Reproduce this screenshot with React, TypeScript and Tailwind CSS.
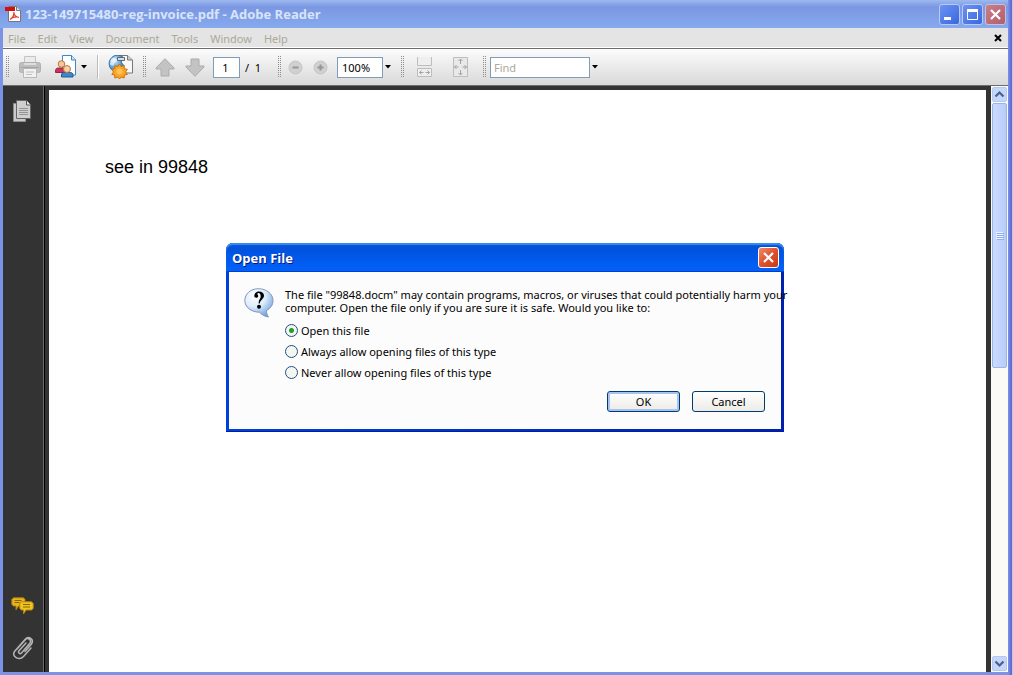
import { FC, ReactNode, useState } from 'react';

const MENU_ITEMS = ['File', 'Edit', 'View', 'Document', 'Tools', 'Window', 'Help'];

const OPEN_OPTIONS = [
  { id: 'open', label: 'Open this file' },
  { id: 'always', label: 'Always allow opening files of this type' },
  { id: 'never', label: 'Never allow opening files of this type' },
];

interface ButtonProps {
  label: string;
  className?: string;
  children: ReactNode;
}

const IconButton: FC<ButtonProps> = ({ label, className = '', children }) => (
  <button type="button" aria-label={label} className={`block shrink-0 ${className}`}>
    {children}
  </button>
);

const Grip: FC<{ className?: string }> = ({ className = '' }) => (
  <svg width="4" height="22" shapeRendering="crispEdges" className={`shrink-0 ${className}`}>
    {Array.from({ length: 11 }, (_, i) => (
      <g key={i} fill="#8e8e8e">
        <rect x="0" y={i * 2} width="1" height="1" />
        <rect x="2" y={i * 2} width="1" height="1" />
      </g>
    ))}
  </svg>
);

const DropArrow: FC = () => (
  <svg width="6" height="4" viewBox="0 0 6 4">
    <path d="M0 0h6L3 3.5z" fill="#000" />
  </svg>
);

const PdfIcon: FC = () => (
  <svg width="16" height="16" viewBox="0 0 16 16">
    <path d="M3.5.5h8l4 4v11h-12z" fill="#fff" stroke="#777" />
    <path d="M11.5.5v4h4" fill="#ddd" stroke="#777" />
    <path
      d="M5 13.5c2-1 4-4 4-7.5M9 7c.5 3 2.5 4 5 4.5M5.5 12.5c2.5-1.5 5-2 8-1.5"
      fill="none"
      stroke="#e0382e"
      strokeWidth="1.2"
    />
    <path d="M0 1h10v4H0z" fill="#d80d0d" />
  </svg>
);

const PrinterIcon: FC = () => (
  <svg width="22" height="22" viewBox="0 0 22 22">
    <path d="M5.5.5h11v8h-11z" fill="#ececec" stroke="#c4c4c4" />
    <rect x=".5" y="6.5" width="21" height="10" rx="2" fill="#bebebe" stroke="#b0b0b0" />
    <path d="M5 7h12v2H5z" fill="#dedede" />
    <path d="M2 11.5h18" stroke="#a5a5a5" />
    <path d="M4.5 12.500h13v9h-13z" fill="#f1f1f1" stroke="#b7b7b7" />
    <path d="M7 16h8M7 18.500h6" stroke="#c0c0c0" />
  </svg>
);

const PeopleIcon: FC = () => (
  <svg width="22" height="24" viewBox="0 0 22 24">
    <path d="M7.5.5h9l4 4.5v15h-13z" fill="#fff" stroke="#3f86c8" />
    <path d="M16.5.5v4.5h4" fill="#cfe4f7" stroke="#3f86c8" />
    <path d="M.5 17.500v-2c0-1.500 1-2.500 3-2.500h5c1.500 0 2.500 1 2.500 2.500v2z" fill="#c9325c" stroke="#9a2245" />
    <circle cx="6.500" cy="9" r="3.300" fill="#f3c79b" stroke="#b9783f" />
    <path d="M6.5 22v-2c0-1.500 1-2.500 3-2.500h6c1.500 0 2.500 1 2.500 2.500v2z" fill="#3d87c9" stroke="#1f5c97" />
    <circle cx="12" cy="14" r="3.500" fill="#f8d0a4" stroke="#b9783f" />
  </svg>
);

const WebIcon: FC = () => (
  <svg width="27" height="24" viewBox="0 0 27 24">
    <defs>
      <radialGradient id="globe" cx=".35" cy=".3" r=".8">
        <stop offset="0" stopColor="#d6ecfa" />
        <stop offset=".5" stopColor="#6aabdf" />
        <stop offset="1" stopColor="#1c66ab" />
      </radialGradient>
    </defs>
    <path d="M10.500.5h10l5 4.500v13h-13z" fill="#f8f8f8" stroke="#777" />
    <path d="M20.500.5v4.500h5" fill="#ccc" stroke="#777" />
    <path d="M17 3a8.500 8.500 0 1 0-8 14c4 0 7-2 8.200-6L14 7z" fill="url(#globe)" stroke="#2a6da8" />
    <path d="M4 4c3-2 5-1 6 1s-3 2-3 4-3 2-4 0z" fill="#fff" opacity=".6" />
    <path d="M10.500 2.500h7v3h-7z" fill="#ddd" stroke="#666" />
    <path
      d="m12.500 9 1.700 2.600 3-1.100v3.200l3.200.7-1.900 2.600 1.900 2.400-3.200.7v2.900l-3-1-1.700 2-1.700-2-3 1v-2.900l-3-.7 1.800-2.400-1.800-2.600 3-.7v-3.200l3 1.100z"
      fill="#f9a526"
      stroke="#c8720c"
    />
    <circle cx="12.500" cy="16.500" r="3" fill="#ffc257" />
  </svg>
);

const PageArrow: FC<{ down?: boolean }> = ({ down }) => (
  <svg width="20" height="19" viewBox="0 0 20 19" className={down ? 'rotate-180' : ''}>
    <path d="M10 .7 19 10v1h-5v7H6v-7H1v-1z" fill="#c3c3c3" stroke="#ababab" />
  </svg>
);

const ZoomIcon: FC<{ plus?: boolean }> = ({ plus }) => (
  <svg width="15" height="15" viewBox="0 0 15 15">
    <circle cx="7.5" cy="7.5" r="6.5" fill="#d0d0d0" stroke="#c6c6c6" />
    <path d={plus ? 'M4.500 7.500h6M7.500 4.500v6' : 'M4.500 7.500h6'} stroke="#969696" strokeWidth="2" />
  </svg>
);

const FitWidthIcon: FC = () => (
  <svg width="16" height="20" viewBox="0 0 16 20">
    <path d="M.5 0v8.500h14V0M.5 19.500v-8h14v8z" fill="#efefef" stroke="#bdbdbd" />
    <path d="M2.5 15.500h4M8.500 15.500h4M4.500 13.500l-2 2 2 2M10.500 13.500l2 2-2 2" fill="none" stroke="#a2a2a2" />
  </svg>
);

const FitPageIcon: FC = () => (
  <svg width="16" height="20" viewBox="0 0 16 20">
    <path d="M.5.5h14v19H.5z" fill="#e9e9e9" stroke="#bdbdbd" />
    <path
      d="M7.5 2v5M5.500 4l2-2 2 2M7.500 18v-5M5.500 16l2 2 2-2M1.500 10h4M3.500 8l-2 2 2 2M13.500 10h-4M11.500 8l2 2-2 2"
      fill="none"
      stroke="#a2a2a2"
    />
  </svg>
);

const PagesIcon: FC = () => (
  <svg width="19" height="22" viewBox="0 0 19 22">
    <path d="M.5 3.500h12v18H.5z" fill="#c9c9c9" stroke="#8e8e8e" />
    <path d="M3.500.5h10l4 4.500v13.500h-14z" fill="#d0d0d0" stroke="#666" />
    <path d="M13.500.5v4.500h4" fill="#eee" stroke="#555" />
    <path d="M6 8.500h9M6 10.500h9M6 12.500h9M6 14.500h9" stroke="#959595" />
  </svg>
);

const CommentsIcon: FC = () => (
  <svg width="23" height="19" viewBox="0 0 23 19">
    <path d="M2.500.8h10l1.500 1.700v5L12.500 9H7.500L5 13V9H2.500L.8 7.500v-5z" fill="#e5b71a" stroke="#b07a0a" />
    <path d="M3.500 3.500h7M3.500 5.500h5" stroke="#8a6208" />
    <path d="M10.500 4.800h10l1.700 1.700v5L20.500 13h-5.500l-2.500 4v-4h-2L8.800 11.500v-5z" fill="#f0c61c" stroke="#b8830c" />
    <path d="M12 7.500h7M12 10h7" stroke="#8a6208" />
  </svg>
);

const ClipIcon: FC = () => (
  <svg width="22" height="24" viewBox="0 0 22 24" fill="none" strokeLinecap="round">
    <path
      d="m5 13 8.500-9.500c2-2.300 6.500.3 4.500 3.500L9.500 17c-1.500 1.700-4-.5-2.500-2.200L14 7M19 12l-7.500 8.500C7.500 25-1 20.500 2.500 15.500L13 3.500c3.500-4 9.500-.5 6.500 4.500L13 15.500"
      stroke="#b5b5b5"
      strokeWidth="1.500"
    />
  </svg>
);

const QuestionIcon: FC = () => (
  <svg width="30" height="30" viewBox="0 0 30 30" className="shrink-0">
    <defs>
      <radialGradient id="bubble" cx=".35" cy=".25" r=".8">
        <stop offset="0" stopColor="#fff" />
        <stop offset=".5" stopColor="#dcecfb" />
        <stop offset="1" stopColor="#6f9fdc" />
      </radialGradient>
    </defs>
    <path
      d="M14.500.7C22.500.7 29 6 29 12.500c0 4.500-2.500 8-6.500 10 0 2.500.5 4.500 2 6.500-4-.5-7-2.500-9-4.800C7 24.200.8 19 .8 12.500.8 6 6.500.7 14.500.7z"
      fill="url(#bubble)"
      stroke="#8197c0"
    />
    <path
      d="M10.300 8.300C10.300 5 12.500 3.500 15 3.500c3 0 5 1.700 5 4.300 0 3.200-3.800 4-4.300 7.700h-1c-.3-3.500 2-4.500 2-7.200 0-2-.8-3.300-2.200-3.300-.8 0-1.200.3-1.200.8 0 .7.900 1 .9 2.200 0 1.100-.8 1.800-1.900 1.800-1.200 0-2-.8-2-1.500z"
      fill="#000"
    />
    <circle cx="15" cy="18.800" r="2" />
  </svg>
);

const Cross: FC = () => (
  <svg width="19" height="19" viewBox="0 0 19 19">
    <path d="m5 5 9 9M14 5l-9 9" stroke="#fff" strokeWidth="2.200" />
  </svg>
);

const Chevron: FC<{ down?: boolean }> = ({ down }) => (
  <svg width="13" height="13" viewBox="0 0 13 13" className={down ? 'rotate-180' : ''}>
    <path d="m2.500 8.500 4-4 4 4" fill="none" stroke="#4d6185" strokeWidth="2.200" />
  </svg>
);

const TitleBar: FC = () => (
  <header className="flex h-7 shrink-0 items-center bg-linear-to-b from-[#9db9ef] via-[#7b97e3] via-25% to-[#86aaee] px-[2px] pl-[5px]">
    <PdfIcon />
    <h1 className="ml-1 pt-px font-['Open_Sans',sans-serif] text-[13px] font-bold text-[#d8e4f8]">
      123-149715480-reg-invoice.pdf - Adobe Reader
    </h1>
    <div className="ml-auto flex gap-[2px]">
      <IconButton
        label="Minimize"
        className="rounded-[3px] border border-[#b9cbf5] bg-linear-to-br from-[#6c93f2] to-[#3a66e0]"
      >
        <svg width="19" height="19">
          <path d="M4 12h7v3H4z" fill="#fff" />
        </svg>
      </IconButton>
      <IconButton
        label="Maximize"
        className="rounded-[3px] border border-[#b9cbf5] bg-linear-to-br from-[#6c93f2] to-[#3a66e0]"
      >
        <svg width="19" height="19">
          <path d="M4.500 5v9.500h10V5" fill="none" stroke="#fff" />
          <path d="M4 4h11v3H4z" fill="#fff" />
        </svg>
      </IconButton>
      <IconButton
        label="Close"
        className="rounded-[3px] border border-[#c9bfdc] bg-linear-to-br from-[#c87f8a] to-[#b35f6c]"
      >
        <Cross />
      </IconButton>
    </div>
  </header>
);

const MenuBar: FC = () => (
  <nav className="flex h-5 shrink-0 items-center bg-[#e4e4e4] pr-1.5 pl-[5px] text-[#aca899]">
    <div className="flex gap-3">
      {MENU_ITEMS.map((item) => (
        <button key={item} type="button">
          {item}
        </button>
      ))}
    </div>
    <IconButton label="Close document" className="ml-auto">
      <svg width="8" height="8">
        <path d="m1 1 6 6M7 1 1 7" stroke="#000" strokeWidth="2" />
      </svg>
    </IconButton>
  </nav>
);

const Toolbar: FC = () => (
  <div className="flex h-[38px] shrink-0 items-center border-t border-b border-[#6d6d6d] bg-linear-to-b from-[#fcfcfc] to-[#d9d9d9] pl-[3px] shadow-[0_-1px_0_#fff]">
    <Grip />
    <IconButton label="Print" className="ml-[9px]">
      <PrinterIcon />
    </IconButton>
    <IconButton label="Collaborate" className="ml-[14px]">
      <PeopleIcon />
    </IconButton>
    <IconButton label="Collaborate options" className="ml-1">
      <DropArrow />
    </IconButton>
    <div className="ml-[10px] h-6 w-[2px] border-r border-l border-r-white border-l-[#bcbcbc]" />
    <IconButton label="Create PDF online" className="ml-2">
      <WebIcon />
    </IconButton>
    <Grip className="ml-[9px]" />
    <IconButton label="Previous page" className="ml-2">
      <PageArrow />
    </IconButton>
    <IconButton label="Next page" className="ml-[10px]">
      <PageArrow down />
    </IconButton>
    <input
      aria-label="Page number"
      defaultValue="1"
      className="ml-2 h-[21px] w-[27px] border border-[#7f9db9] bg-white pr-[2px] text-center"
    />
    <span className="w-[38px] pl-[5px] whitespace-pre">/  1</span>
    <Grip />
    <IconButton label="Zoom out" className="ml-1.5">
      <ZoomIcon />
    </IconButton>
    <IconButton label="Zoom in" className="ml-[10px]">
      <ZoomIcon plus />
    </IconButton>
    <input
      aria-label="Zoom level"
      defaultValue="100%"
      className="ml-[9px] h-[21px] w-[46px] border border-[#7f9db9] bg-white pl-1"
    />
    <IconButton label="Zoom levels" className="ml-[2px]">
      <DropArrow />
    </IconButton>
    <Grip className="ml-[10px]" />
    <IconButton label="Fit width" className="ml-3">
      <FitWidthIcon />
    </IconButton>
    <IconButton label="Fit page" className="ml-5">
      <FitPageIcon />
    </IconButton>
    <Grip className="ml-[14px]" />
    <input
      aria-label="Find"
      placeholder="Find"
      className="ml-[3px] h-[21px] w-[100px] border border-[#7f9db9] bg-white pl-[3px] placeholder:text-[#aca899]"
    />
    <IconButton label="Find options" className="ml-[2px]">
      <DropArrow />
    </IconButton>
  </div>
);

const Sidebar: FC = () => (
  <aside className="flex w-[42px] shrink-0 flex-col items-center border-r border-black bg-[#333] pt-[14px] pr-[2px] pb-3 shadow-[inset_-1px_0_0_#6b6b6b]">
    <IconButton label="Pages">
      <PagesIcon />
    </IconButton>
    <IconButton label="Comments" className="mt-auto">
      <CommentsIcon />
    </IconButton>
    <IconButton label="Attachments" className="mt-5">
      <ClipIcon />
    </IconButton>
  </aside>
);

const ScrollBar: FC = () => (
  <div className="flex w-[17px] shrink-0 flex-col items-center bg-[#fbfaf6] py-px">
    <IconButton label="Scroll up" className="rounded-[2px] border border-[#b4c8f4] bg-[#c5d6fb]">
      <Chevron />
    </IconButton>
    <div className="flex w-full flex-1 flex-col items-center pt-px">
      <div className="flex h-[48%] w-[15px] items-center justify-center rounded-[2px] border border-[#98b4ec] bg-linear-to-r from-[#cbdafe] to-[#b9cdfb]">
        <svg width="8" height="8" shapeRendering="crispEdges">
          <path d="M0 .5h7M0 2.500h7M0 4.500h7M0 6.500h7" stroke="#eef4fe" />
          <path d="M1 1.500h7M1 3.500h7M1 5.500h7M1 7.500h7" stroke="#8cb0f8" />
        </svg>
      </div>
    </div>
    <IconButton label="Scroll down" className="rounded-[2px] border border-[#b4c8f4] bg-[#c5d6fb]">
      <Chevron down />
    </IconButton>
  </div>
);

const OpenFileDialog: FC = () => {
  const [choice, setChoice] = useState('open');

  return (
    <section
      role="dialog"
      aria-labelledby="dialog-title"
      className="w-[558px] rounded-t-[7px] border-b border-[#001ea0] bg-linear-to-r from-[#0040dc] to-[#0020b0] px-[3px] pb-[2px]"
    >
      <div className="-mx-[3px] flex h-[29px] items-center rounded-t-[7px] bg-linear-to-b from-[#0a52cc] via-[#0054e3] via-30% to-[#0262fb] pr-[5px] pl-1.5 shadow-[inset_0_2px_1px_#3a8cf5,inset_0_-1px_0_#0040c8]">
        <h2
          id="dialog-title"
          className="pt-[2px] font-['Open_Sans',sans-serif] text-[13px] font-bold text-white [text-shadow:1px_1px_0_#0a1883]"
        >
          Open File
        </h2>
        <IconButton
          label="Close dialog"
          className="ml-auto rounded-[3px] border border-white bg-linear-to-br from-[#f0886a] via-[#e0502c] to-[#c83a12]"
        >
          <Cross />
        </IconButton>
      </div>
      <form className="bg-[#fcfcfc] pt-4 pr-4 pb-[17px] pl-[15px]" onSubmit={(e) => e.preventDefault()}>
        <div className="flex gap-[11px]">
          <QuestionIcon />
          <div className="leading-[13px] whitespace-nowrap">
            <p>
              The file "99848.docm" may contain programs, macros, or viruses that could potentially harm your
              <br />
              computer. Open the file only if you are sure it is safe. Would you like to:
            </p>
            <div className="mt-[10px] flex flex-col gap-2">
              {OPEN_OPTIONS.map((option) => (
                <label key={option.id} className="flex items-center gap-[3px]">
                  <input
                    type="radio"
                    name="open-option"
                    checked={choice === option.id}
                    onChange={() => setChoice(option.id)}
                    className="h-[13px] w-[13px] appearance-none rounded-full border border-[#1d5281] bg-[#f5f5f2] checked:bg-[radial-gradient(circle,#21a121_0_2px,#f5f5f2_3px)]"
                  />
                  {option.label}
                </label>
              ))}
            </div>
          </div>
        </div>
        <div className="mt-3 flex justify-end gap-3">
          <button
            type="submit"
            className="h-[21px] w-[73px] rounded-[3px] border border-[#003c74] bg-linear-to-b from-white to-[#ecebe5] shadow-[inset_0_0_0_2px_#a9c3f0]"
          >
            OK
          </button>
          <button
            type="button"
            className="h-[21px] w-[73px] rounded-[3px] border border-[#003c74] bg-linear-to-b from-white to-[#ecebe5]"
          >
            Cancel
          </button>
        </div>
      </form>
    </section>
  );
};

export default function App() {
  return (
    <div className="relative flex h-screen border-r border-[#c9c6ea] bg-[#7b92e6] font-['Noto_Sans',sans-serif] text-[11px] leading-[13px] text-black">
      <div className="flex min-w-0 flex-1 flex-col">
        <TitleBar />
        <div className="flex min-h-0 flex-1 flex-col pb-[3px] pl-[3px]">
          <MenuBar />
          <Toolbar />
          <div className="flex min-h-0 flex-1 bg-[#333]">
            <Sidebar />
            <main className="min-w-0 flex-1 px-1 pt-1 pr-[5px]">
              <article className="h-full bg-white px-14 pt-[65px]">
                <p className="font-['Liberation_Sans',sans-serif] text-[18px] leading-6">see in 99848</p>
              </article>
            </main>
            <ScrollBar />
          </div>
        </div>
      </div>
      <div className="w-1 shrink-0 bg-linear-to-r from-[#7b92e6] to-[#5a64cc]" />
      <div className="absolute inset-0 flex items-center justify-center pr-[2px]">
        <OpenFileDialog />
      </div>
    </div>
  );
}
